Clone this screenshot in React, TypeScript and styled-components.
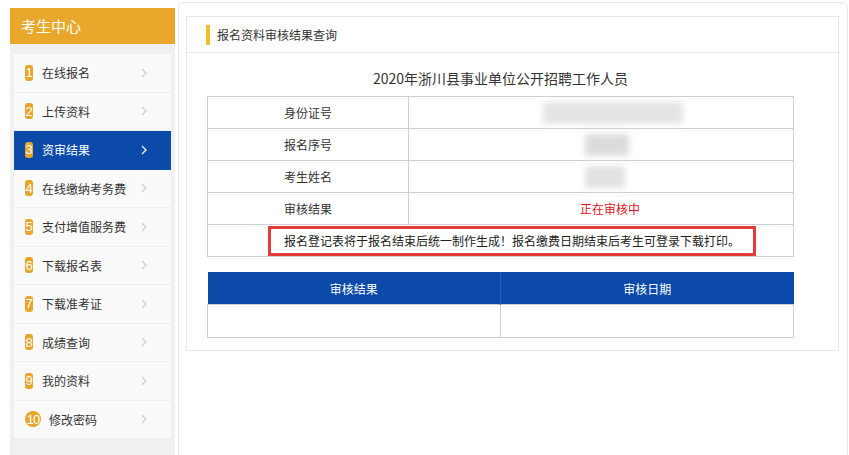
import React from 'react';
import styled, { createGlobalStyle } from 'styled-components';

const GlobalStyle = createGlobalStyle`
  html, body {
    margin: 0;
    padding: 0;
    background: #fff;
  }
  body {
    font-family: "Noto Sans CJK SC", "Liberation Sans", sans-serif;
    color: #333;
  }
`;

const Page = styled.div`
  display: flex;
  align-items: flex-start;
  padding: 8px 0 0 10px;
  height: 455px;
  box-sizing: border-box;
  overflow: hidden;
`;

const Sidebar = styled.aside`
  width: 165px;
  flex-shrink: 0;
  background: #f0f0f0;
  padding-bottom: 16px;
`;

const SideHeader = styled.div`
  height: 36px;
  background: #e9a82b;
  color: #fff;
  font-size: 15px;
  line-height: 36px;
  padding-left: 11px;
  margin-bottom: 10px;
`;

const Menu = styled.ul`
  list-style: none;
  margin: 0 4px;
  padding: 0;
`;

const MenuItem = styled.li<{ $active?: boolean }>`
  display: flex;
  align-items: center;
  height: 37.5px;
  border-bottom: 1px solid ${(p) => (p.$active ? '#0b4aa8' : '#efefef')};
  background: ${(p) => (p.$active ? '#0b4aa8' : '#fafafa')};
  color: ${(p) => (p.$active ? '#fff' : '#333')};
  font-size: 12px;
  padding-left: 11px;
  padding-right: 24px;
`;

const Badge = styled.span<{ $wide?: boolean }>`
  display: inline-flex;
  align-items: center;
  justify-content: center;
  width: ${(p) => (p.$wide ? '16px' : '8px')};
  height: 16px;
  border-radius: ${(p) => (p.$wide ? '8px' : '3px')};
  background: #e8a52a;
  color: #fff;
  font-size: 13px;
  font-family: "Liberation Sans", sans-serif;
  letter-spacing: ${(p) => (p.$wide ? '-1px' : '0')};
  margin-right: ${(p) => (p.$wide ? '8px' : '9px')};
`;

const ItemLabel = styled.span`
  flex: 1;
`;

const Chevron = ({ active }: { active?: boolean }) => (
  <svg width="6" height="10" viewBox="0 0 6 10">
    <polyline
      points="1,1 5,5 1,9"
      fill="none"
      stroke={active ? '#fff' : '#d0d0d0'}
      strokeWidth="1.3"
    />
  </svg>
);

const Main = styled.main`
  flex: 1;
  margin: -6px 1px 0 3px;
  height: 470px;
  border: 1px solid #e6e6e6;
  border-radius: 6px;
  padding: 13px 8px 0 7px;
`;

const Panel = styled.section`
  border: 1px solid #e8e8e8;
  height: 333px;
`;

const PanelHeader = styled.div`
  display: flex;
  align-items: center;
  height: 35px;
  border-bottom: 1px solid #e8e8e8;
  padding-left: 19px;
  font-size: 12px;
  color: #333;
`;

const YellowBar = styled.span`
  width: 4px;
  height: 20px;
  background: #f4be2e;
  margin-right: 7px;
`;

const Content = styled.div`
  width: 587px;
  margin-left: 20px;
`;

const Title = styled.h2`
  margin: 0;
  padding-top: 15px;
  height: 28px;
  text-align: center;
  font-size: 14px;
  font-weight: normal;
  line-height: 20px;
  color: #333;
`;

const InfoTable = styled.table`
  width: 100%;
  border-collapse: collapse;
  font-size: 12px;
`;

const Cell = styled.td<{ $label?: boolean }>`
  height: 31px;
  padding: 0;
  border: 1px solid #cfcfcf;
  text-align: center;
  width: ${(p) => (p.$label ? '200px' : 'auto')};
  vertical-align: middle;
`;

const ValueCell = styled(Cell)`
  text-align: left;
  padding-left: 10px;
`;

const Smudge = styled.span<{ $w: number; $offset: number; $shade: string }>`
  display: inline-block;
  width: ${(p) => p.$w}px;
  height: 22px;
  margin-left: ${(p) => p.$offset}px;
  background: ${(p) => p.$shade};
  filter: blur(3px);
  vertical-align: middle;
`;

const Status = styled.span`
  display: inline-block;
  margin-left: 161px;
  color: #e0141e;
`;

const NoticeCell = styled.td`
  height: 31px;
  padding: 0 0 0 60px;
  border: 1px solid #cfcfcf;
`;

const NoticeBox = styled.div`
  display: inline-block;
  height: 24px;
  border: 3px solid #e43b3b;
  line-height: 24px;
  font-size: 12px;
  padding: 0 13px;
  color: #222;
  margin-top: 1px;
  white-space: nowrap;
  vertical-align: top;
`;

const ResultTable = styled.table`
  width: 100%;
  margin-top: 15px;
  border-collapse: collapse;
  font-size: 12px;
`;

const HeadCell = styled.th`
  height: 32px;
  padding: 0;
  background: #0b4aa8;
  color: #fff;
  font-weight: normal;
  width: 50%;
  border-left: 1px solid #2a5fb0;
  &:first-child {
    border-left: none;
  }
`;

const DataCell = styled.td`
  height: 30px;
  border: 1px solid #cfcfcf;
`;

const menu = [
  '在线报名',
  '上传资料',
  '资审结果',
  '在线缴纳考务费',
  '支付增值服务费',
  '下载报名表',
  '下载准考证',
  '成绩查询',
  '我的资料',
  '修改密码',
];

const App = () => {
  return (
    <>
      <GlobalStyle />
      <Page>
        <Sidebar>
          <SideHeader>考生中心</SideHeader>
          <Menu>
            {menu.map((label, i) => (
              <MenuItem key={label} $active={i === 2}>
                <Badge $wide={i === 9}>{i + 1}</Badge>
                <ItemLabel>{label}</ItemLabel>
                <Chevron active={i === 2} />
              </MenuItem>
            ))}
          </Menu>
        </Sidebar>
        <Main>
          <Panel>
            <PanelHeader>
              <YellowBar />
              报名资料审核结果查询
            </PanelHeader>
            <Content>
              <Title>2020年浙川县事业单位公开招聘工作人员</Title>
              <InfoTable>
                <tbody>
                  <tr>
                    <Cell $label>身份证号</Cell>
                    <ValueCell>
                      <Smudge $w={140} $offset={124} $shade="#e4e4e4" />
                    </ValueCell>
                  </tr>
                  <tr>
                    <Cell $label>报名序号</Cell>
                    <ValueCell>
                      <Smudge $w={44} $offset={166} $shade="#dcdcdc" />
                    </ValueCell>
                  </tr>
                  <tr>
                    <Cell $label>考生姓名</Cell>
                    <ValueCell>
                      <Smudge $w={40} $offset={166} $shade="#e2e2e2" />
                    </ValueCell>
                  </tr>
                  <tr>
                    <Cell $label>审核结果</Cell>
                    <ValueCell>
                      <Status>正在审核中</Status>
                    </ValueCell>
                  </tr>
                  <tr>
                    <NoticeCell colSpan={2}>
                      <NoticeBox>
                        报名登记表将于报名结束后统一制作生成！报名缴费日期结束后考生可登录下载打印。
                      </NoticeBox>
                    </NoticeCell>
                  </tr>
                </tbody>
              </InfoTable>
              <ResultTable>
                <thead>
                  <tr>
                    <HeadCell>审核结果</HeadCell>
                    <HeadCell>审核日期</HeadCell>
                  </tr>
                </thead>
                <tbody>
                  <tr>
                    <DataCell />
                    <DataCell />
                  </tr>
                </tbody>
              </ResultTable>
            </Content>
          </Panel>
        </Main>
      </Page>
    </>
  );
};

export default App;
